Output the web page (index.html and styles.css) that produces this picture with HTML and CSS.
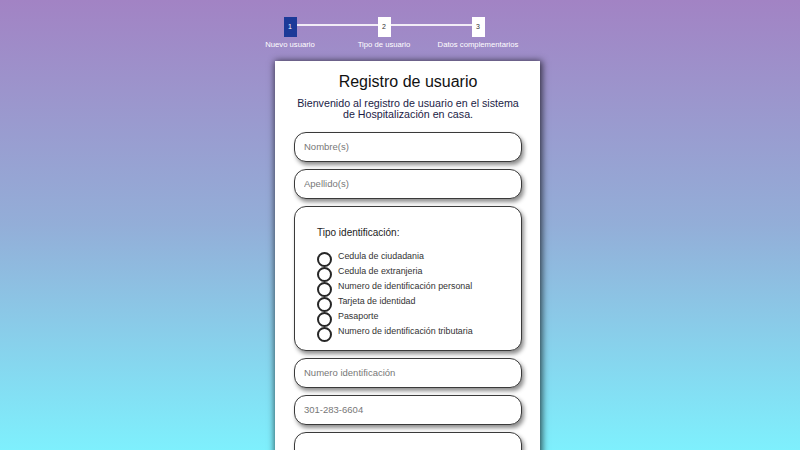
FILE: index.html
```html
<!DOCTYPE html>
<html lang="es">
<head>
<meta charset="utf-8">
<title>Registro de usuario</title>
<link rel="stylesheet" href="styles.css">
</head>
<body>
  <div class="stepper">
    <div class="step active">
      <div class="step-box">1</div>
      <div class="step-label">Nuevo usuario</div>
    </div>
    <div class="step">
      <div class="step-box">2</div>
      <div class="step-label">Tipo de usuario</div>
    </div>
    <div class="step">
      <div class="step-box">3</div>
      <div class="step-label">Datos complementarios</div>
    </div>
  </div>

  <form class="card">
    <h1 class="title">Registro de usuario</h1>
    <p class="subtitle">Bienvenido al registro de usuario en el sistema de Hospitalización en casa.</p>

    <div class="field"><input class="input" type="text" placeholder="Nombre(s)"></div>
    <div class="field"><input class="input" type="text" placeholder="Apellido(s)"></div>

    <div class="field radio-box">
      <div class="radio-title">Tipo identificación:</div>
      <label class="radio-row"><span class="radio"></span><span class="radio-text">Cedula de ciudadania</span></label>
      <label class="radio-row"><span class="radio"></span><span class="radio-text">Cedula de extranjeria</span></label>
      <label class="radio-row"><span class="radio"></span><span class="radio-text">Numero de identificación personal</span></label>
      <label class="radio-row"><span class="radio"></span><span class="radio-text">Tarjeta de identidad</span></label>
      <label class="radio-row"><span class="radio"></span><span class="radio-text">Pasaporte</span></label>
      <label class="radio-row"><span class="radio"></span><span class="radio-text">Numero de identificación tributaria</span></label>
    </div>

    <div class="field"><input class="input" type="text" placeholder="Numero identificación"></div>
    <div class="field"><input class="input" type="text" placeholder="301-283-6604"></div>
    <div class="field"><input class="input" type="password" placeholder=""></div>
    <div class="field"><input class="input" type="password" placeholder=""></div>
  </form>
</body>
</html>
```

FILE: styles.css
```css
html {
  height: 100%;
  background: linear-gradient(to bottom, #a283c4 0%, #93aed8 50%, #7ef0fd 100%);
}

body {
  margin: 0;
  height: 450px;
  overflow: hidden;
  font-family: "Liberation Sans", Arial, sans-serif;
}

.stepper {
  position: relative;
  display: flex;
  margin-left: 243px;
  padding-top: 17px;
  width: 282px;
}

.stepper::before {
  content: "";
  position: absolute;
  left: 47px;
  right: 47px;
  top: 24px;
  height: 2px;
  background: #f1ecf6;
}

.step {
  position: relative;
  width: 94px;
  display: flex;
  flex-direction: column;
  align-items: center;
}

.step-box {
  width: 13px;
  height: 20px;
  background: #ffffff;
  color: #333;
  font-size: 7px;
  line-height: 20px;
  text-align: center;
}

.step.active .step-box {
  background: #1c3a98;
  color: #ffffff;
}

.step-label {
  margin-top: 2.5px;
  font-size: 7.7px;
  line-height: 9px;
  color: #ffffff;
  white-space: nowrap;
}

.card {
  display: flex;
  flex-direction: column;
  gap: 7px;
  margin: 12px 0 0 275px;
  width: 228px;
  padding: 12px 18px 20px 19px;
  background: #ffffff;
  box-shadow: 1px 1px 7px 1px rgba(0, 0, 0, 0.7);
}

.title {
  margin: 0;
  font-size: 16px;
  line-height: 18px;
  font-weight: normal;
  text-align: center;
  color: #111;
}

.subtitle {
  margin: 0 0 4px;
  font-size: 10.7px;
  line-height: 11.5px;
  text-align: center;
  color: #1b1b46;
}

.field {
  box-sizing: border-box;
  border: 1px solid #3a3a3a;
  border-radius: 12px;
  background: #ffffff;
  box-shadow: 2px 3px 4px rgba(0, 0, 0, 0.45);
}

.input {
  display: block;
  box-sizing: border-box;
  width: 100%;
  height: 28px;
  border: none;
  outline: none;
  background: transparent;
  padding: 0 9px;
  font-family: "Liberation Sans", Arial, sans-serif;
  font-size: 9.5px;
  color: #333;
}

.input::placeholder {
  color: #777;
}

.radio-box {
  padding: 20px 10px 10px 22px;
}

.radio-title {
  font-size: 10px;
  line-height: 12px;
  color: #222;
  margin-bottom: 11px;
}

.radio-row {
  display: flex;
  align-items: flex-start;
  height: 15px;
  gap: 6px;
}

.radio {
  box-sizing: border-box;
  flex: none;
  width: 15px;
  height: 15px;
  margin-top: 2px;
  border: 2px solid #262626;
  border-radius: 50%;
}

.radio-text {
  font-size: 8.9px;
  line-height: 12px;
  color: #333;
}
```
